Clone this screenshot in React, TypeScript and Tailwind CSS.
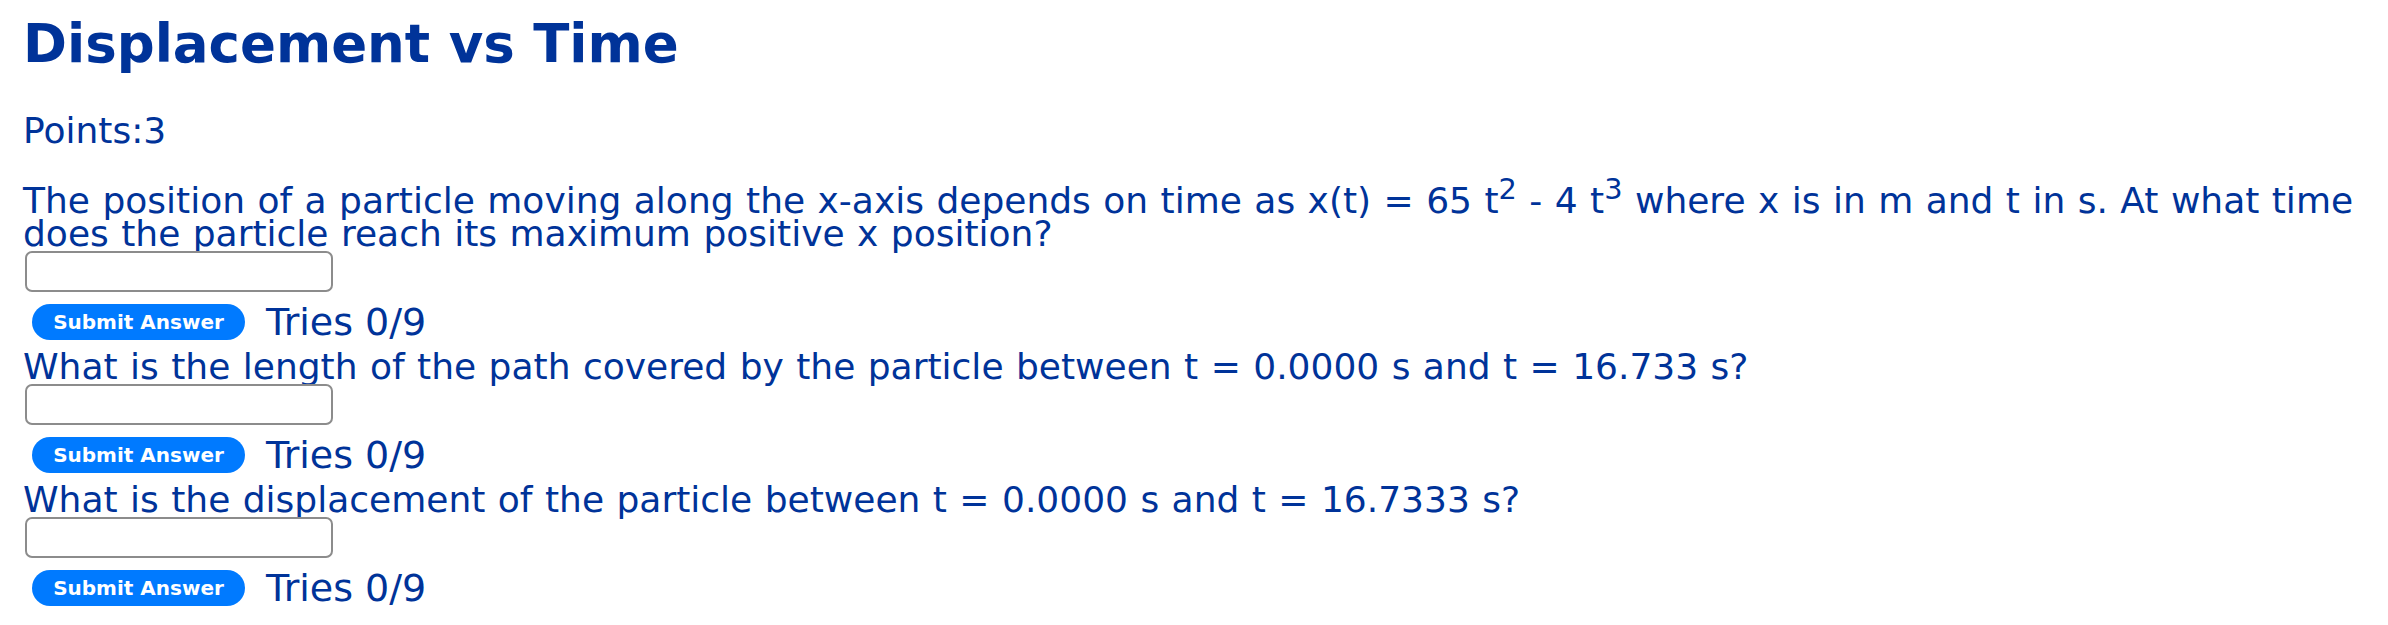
import React from "react";

type Question = {
  id: string;
  text: React.ReactNode;
};

const questions: Question[] = [
  {
    id: "q1",
    text: (
      <>
        The position of a particle moving along the x-axis depends on time as x(t) = 65 t
        <sup className="text-[80%]">2</sup> - 4 t<sup className="text-[80%]">3</sup> where x is in m
        and t in s. At what time does the particle reach its maximum positive x position?
      </>
    ),
  },
  {
    id: "q2",
    text: "What is the length of the path covered by the particle between t = 0.0000 s and t = 16.733 s?",
  },
  {
    id: "q3",
    text: "What is the displacement of the particle between t = 0.0000 s and t = 16.7333 s?",
  },
];

function QuestionBlock({ q, first }: { q: Question; first: boolean }) {
  return (
    <div className={first ? "mt-[37px]" : "mt-[10px]"}>
      <div className="text-[36px] leading-[33px] [word-spacing:1px]">{q.text}</div>
      <input
        type="text"
        className="relative mt-px ml-[2px] block h-[41px] w-[308px] rounded-[7px] border-2 border-[#8c8c8c] bg-white px-2 outline-none"
      />
      <div className="mt-[12px] flex h-[36px] items-center">
        <button
          type="button"
          className="ml-[9px] flex h-[36px] w-[213px] items-center justify-center rounded-full bg-[#007aff] text-[20px] font-bold leading-none text-white"
        >
          Submit Answer
        </button>
        <span className="ml-[21px] text-[38px] leading-[36px]">Tries 0/9</span>
      </div>
    </div>
  );
}

export default function App() {
  return (
    <div className="min-h-[625px] bg-white pl-[23px] pr-[8px] pt-[17px] font-['DejaVu_Sans',sans-serif] text-[#003399]">
      <h1 className="text-[53px] font-bold leading-[54px]">Displacement vs Time</h1>
      <div className="mt-[43px] text-[36px] leading-[33px]">Points:3</div>
      {questions.map((q, i) => (
        <QuestionBlock key={q.id} q={q} first={i === 0} />
      ))}
    </div>
  );
}
